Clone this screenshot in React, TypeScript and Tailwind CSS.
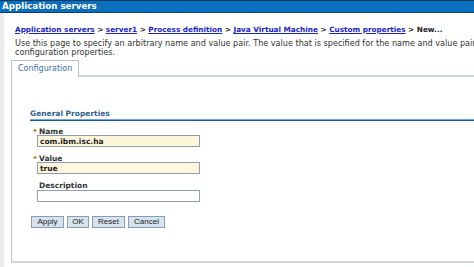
import React from 'react';

const font = { fontFamily: '"DejaVu Sans", Verdana, sans-serif' };

function Required({ label }: { label: string }) {
  return (
    <div className="flex items-center h-[7px] text-[7.5px] font-bold text-[#333] leading-[7px]">
      <span className="w-[7px] text-[#a08a30] text-[7px] leading-none">✦</span>
      <span>{label}</span>
    </div>
  );
}

const inputCls = 'block ml-[5px] w-[163px] h-[12px] border border-[#8aa0b4] text-[7.5px] font-bold text-[#222] px-[2px] outline-none';

export default function App() {
  const crumbs = ['Application servers', 'server1', 'Process definition', 'Java Virtual Machine', 'Custom properties'];

  return (
    <div className="w-[474px] h-[267px] overflow-hidden bg-white flex flex-col" style={font}>
      <div className="h-[13px] shrink-0 bg-[#0b6fbe] border-t border-[#15395c] border-b border-b-[#0d3d6a] text-white text-[8.7px] font-bold leading-[11px] pl-[2px]">
        Application servers
      </div>
      <div className="flex flex-1 min-h-0">
        <div className="w-[4px] bg-[#ebebeb] shrink-0" />
        <div className="flex-1 flex flex-col min-w-0">
          <div className="pl-[11px] pt-[12px] text-[7.3px] font-bold text-[#222] whitespace-nowrap leading-[10px]">
            {crumbs.map((c) => (
              <React.Fragment key={c}>
                <span className="text-[#1a23c8] underline">{c}</span>
                <span> &gt; </span>
              </React.Fragment>
            ))}
            <span>New...</span>
          </div>
          <p className="pl-[11px] pt-[4px] text-[8.1px] text-[#333] leading-[9px] whitespace-nowrap overflow-hidden">
            Use this page to specify an arbitrary name and value pair. The value that is specified for the name and value pair is used for
            <br />
            configuration properties.
          </p>
          <div className="ml-[7px] mt-[3px] flex items-end">
            <div className="h-[17px] w-[68px] border border-b-0 border-[#b8c4d0] bg-white text-[8px] text-[#3a72a8] leading-[16px] pl-[6px]">
              Configuration
            </div>
            <div className="flex-1 border-b-2 border-[#cdd5dd]" />
          </div>
          <div className="ml-[7px] h-[186px] shrink-0 border-l border-[#b8c4d0] border-b-2 border-b-[#cdd5dd] pl-[18px] pt-[32px]">
            <div className="text-[7.5px] font-bold text-[#2e5f94] leading-[9px]">General Properties</div>
            <div className="h-[2px] border-t border-[#6ea8de] border-b border-b-[#1e5a98] mt-[1px]" />
            <div className="pl-[2px] pt-[7px]">
              <Required label="Name" />
              <input readOnly value="com.ibm.isc.ha" className={`${inputCls} bg-[#fdf6da]`} style={font} />
              <div className="h-[8px]" />
              <Required label="Value" />
              <input readOnly value="true" className={`${inputCls} bg-[#fdf6da]`} style={font} />
              <div className="h-[8px]" />
              <div className="pl-[7px] h-[8px] text-[7.5px] font-bold text-[#333] leading-[7px]">Description</div>
              <input readOnly value="" className={`${inputCls} bg-white`} style={font} />
              <div className="flex gap-[3px] pt-[14px] ml-[-1px]">
                {[
                  ['Apply', 'w-[33px]'],
                  ['OK', 'w-[22px]'],
                  ['Reset', 'w-[33px]'],
                  ['Cancel', 'w-[37px]'],
                ].map(([t, w]) => (
                  <button
                    key={t}
                    className={`${w} h-[12px] bg-[#d6e2ee] border border-[#8a9cb0] text-[8px] text-[#222] leading-[10px]`}
                    style={{ fontFamily: '"Liberation Sans", Arial, sans-serif' }}
                  >
                    {t}
                  </button>
                ))}
              </div>
            </div>
          </div>
        </div>
      </div>
    </div>
  );
}
